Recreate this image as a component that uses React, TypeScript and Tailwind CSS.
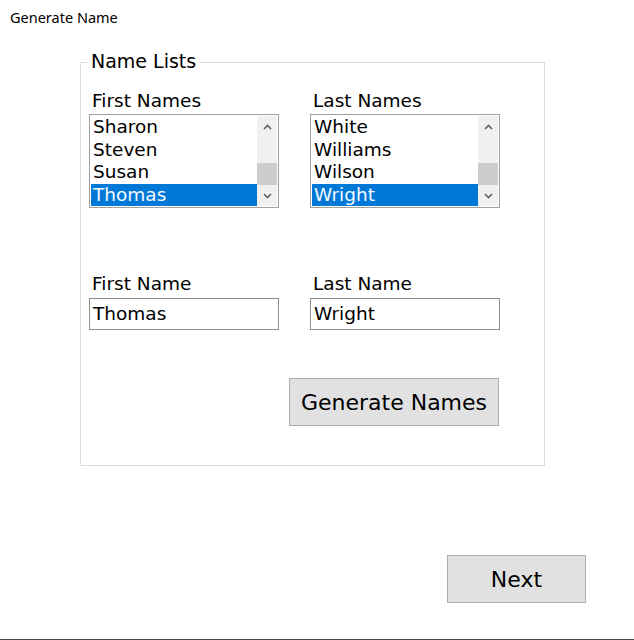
import React from "react";

const FONT = { fontFamily: '"DejaVu Sans", "Liberation Sans", sans-serif' };

function Chevron({ up }: { up?: boolean }) {
  return (
    <svg width="9" height="6" viewBox="0 0 9 6" className="block">
      <path
        d={up ? "M1 5 L4.5 1.5 L8 5" : "M1 1 L4.5 4.5 L8 1"}
        fill="none"
        stroke="#606060"
        strokeWidth="1.6"
      />
    </svg>
  );
}

function ListBox({ items, selected }: { items: string[]; selected: string }) {
  return (
    <div className="mt-[2px] w-[190px] border border-[#a0a0a0] bg-white p-[1px] flex">
      <div className="w-[166px] flex flex-col">
        {items.map((it) => (
          <div
            key={it}
            className={
              "h-[22.5px] leading-[22.5px] pl-[2px] text-[18.5px] " +
              (it === selected ? "bg-[#0078d7] text-[#f4f8ff]" : "text-black")
            }
          >
            {it}
          </div>
        ))}
      </div>
      <div className="w-[20px] bg-[#f0f0f0] flex flex-col">
        <div className="h-[21px] flex items-center justify-center">
          <Chevron up />
        </div>
        <div className="h-[26px]" />
        <div className="h-[22px] bg-[#cdcdcd]" />
        <div className="h-[21px] flex items-center justify-center">
          <Chevron />
        </div>
      </div>
    </div>
  );
}

function TextField({ value }: { value: string }) {
  return (
    <div className="mt-[3px] w-[190px] h-[32px] border border-[#8c8c8c] bg-white pl-[3px] text-[18.5px] leading-[30px] text-black">
      {value}
    </div>
  );
}

export default function App() {
  return (
    <div className="w-[634px] h-[640px] bg-white flex flex-col" style={FONT}>
      <div
        className="pt-[7px] pl-[10px] text-[14.5px] leading-[20px] text-black"
        style={{ fontFamily: '"Noto Sans", "Open Sans", sans-serif' }}
      >
        Generate Name
      </div>

      <div className="relative ml-[80px] mt-[35px] w-[465px] border border-[#dcdcdc] pt-[27px] pl-[8px] pb-[39px]">
        <span className="absolute -top-[13px] left-[7px] bg-white px-[3px] text-[19px] leading-[22px] text-black">
          Name Lists
        </span>

        <div className="flex gap-[31px]">
          <div className="flex flex-col">
            <div className="h-[22px] leading-[22px] text-[18.5px] pl-[3px] text-black">First Names</div>
            <ListBox items={["Sharon", "Steven", "Susan", "Thomas"]} selected="Thomas" />
          </div>
          <div className="flex flex-col">
            <div className="h-[22px] leading-[22px] text-[18.5px] pl-[3px] text-black">Last Names</div>
            <ListBox items={["White", "Williams", "Wilson", "Wright"]} selected="Wright" />
          </div>
        </div>

        <div className="flex gap-[31px] mt-[65px]">
          <div className="flex flex-col">
            <div className="h-[22px] leading-[22px] text-[18.5px] pl-[3px] text-black">First Name</div>
            <TextField value="Thomas" />
          </div>
          <div className="flex flex-col">
            <div className="h-[22px] leading-[22px] text-[18.5px] pl-[3px] text-black">Last Name</div>
            <TextField value="Wright" />
          </div>
        </div>

        <div className="w-[410px] flex justify-end mt-[48px]">
          <button className="w-[210px] h-[48px] bg-[#e1e1e1] border border-[#adadad] flex items-center justify-center text-[22px] text-black">
            Generate Names
          </button>
        </div>
      </div>

      <div className="flex justify-end mt-[89px] pr-[48px]">
        <button className="w-[139px] h-[48px] bg-[#e1e1e1] border border-[#adadad] flex items-center justify-center text-[22px] text-black">
          Next
        </button>
      </div>

      <div className="mt-auto h-[1px] bg-[#454545]" />
    </div>
  );
}
